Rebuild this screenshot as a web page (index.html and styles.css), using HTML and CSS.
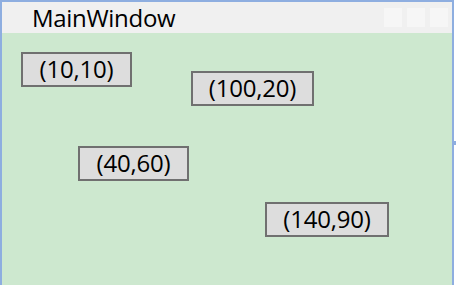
FILE: index.html
```html
<!DOCTYPE html>
<html lang="en">
<head>
    <meta charset="UTF-8">
    <title>MainWindow</title>
    <link rel="stylesheet" href="styles.css">
</head>
<body>
    <div class="window">
        <div class="titlebar">
            <span class="title">MainWindow</span>
            <div class="caption-buttons">
                <div class="caption-btn"></div>
                <div class="caption-btn"></div>
                <div class="caption-btn"></div>
            </div>
        </div>
        <div class="canvas">
            <div class="btn" style="left: 19px; top: 19px;">(10,10)</div>
            <div class="btn btn-wide" style="left: 189px; top: 38px;">(100,20)</div>
            <div class="btn" style="left: 76px; top: 113px;">(40,60)</div>
            <div class="btn btn-wider" style="left: 263px; top: 169px;">(140,90)</div>
        </div>
    </div>
    <div class="edge-stub"></div>
</body>
</html>
```

FILE: styles.css
```css
body {
    margin: 0;
    background: #ffffff;
    font-family: "Open Sans", "Noto Sans", sans-serif;
    overflow: hidden;
}

.window {
    width: 450px;
    height: 283px;
    border: 2px solid #8eaee0;
    border-bottom: none;
    background: #cde8cf;
}

.titlebar {
    height: 31px;
    background: #f0f0f0;
    display: flex;
    align-items: center;
    justify-content: space-between;
}

.title {
    margin-left: 30px;
    font-size: 24px;
    color: #000;
    letter-spacing: -0.3px;
}

.caption-buttons {
    display: flex;
    gap: 5px;
    margin-right: 4px;
}

.caption-btn {
    width: 18px;
    height: 19px;
    background: #f6f6f6;
}

.canvas {
    position: relative;
    height: 252px;
}

.btn {
    position: absolute;
    box-sizing: border-box;
    width: 111px;
    height: 35px;
    padding-bottom: 2px;
    border: 2px solid #707070;
    background: #dddddd;
    color: #000;
    font-size: 24px;
    display: flex;
    align-items: center;
    justify-content: center;
    letter-spacing: -0.2px;
}

.btn-wide {
    width: 123px;
}

.btn-wider {
    width: 124px;
}

.edge-stub {
    position: absolute;
    left: 454px;
    top: 141px;
    width: 2px;
    height: 4px;
    background: #8eaee0;
}
```
